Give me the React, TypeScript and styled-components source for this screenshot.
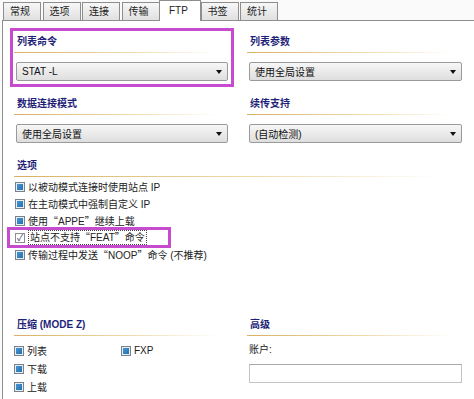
import React, {FC} from "react";
import styled, {createGlobalStyle} from "styled-components";

const GlobalStyle = createGlobalStyle`
  html, body {
    margin: 0;
    padding: 0;
    background: #fafafa;
  }
  body {
    font-family: "Liberation Sans", "Noto Sans CJK SC", sans-serif;
    font-size: 10px;
    color: #1e1e1e;
  }
`;

const Window = styled.div`
  width: 474px;
  height: 399px;
  overflow: hidden;
  display: flex;
  flex-direction: column;
  background: #fafafa;
`;

const TabBar = styled.div`
  display: flex;
  align-items: flex-end;
  height: 20px;
  padding-left: 3px;
  gap: 1.5px;
`;

const Tab = styled.div<{ $active?: boolean }>`
  position: relative;
  box-sizing: border-box;
  width: ${p => (p.$active ? 42 : 38)}px;
  height: ${p => (p.$active ? 21 : 18)}px;
  margin: ${p => (p.$active ? "0 -2px -1px" : "0")};
  padding-left: ${p => (p.$active ? 9 : 6)}px;
  border: 1px solid #8e8e8e;
  border-bottom: none;
  background: ${p => (p.$active ? "#fff" : "linear-gradient(#f7f7f7, #e0e0e0)")};
  line-height: ${p => (p.$active ? 19 : 17)}px;
  color: #222;
  z-index: ${p => (p.$active ? 2 : 1)};
`;

const Panel = styled.div`
  flex: 1;
  margin-left: 2px;
  padding: 13px 12px 0 13px;
  border-top: 1px solid #8e8e8e;
  border-left: 1px solid #8e8e8e;
  background: #fff;
  display: grid;
  grid-template-columns: 212px 213px;
  grid-auto-rows: min-content;
  column-gap: 21px;
  row-gap: 15px;
`;

const Section = styled.section<{ $wide?: boolean; $highlight?: boolean; $gapAbove?: number }>`
  display: flex;
  flex-direction: column;
  grid-column: ${p => (p.$wide ? "1 / -1" : "auto")};
  margin-top: ${p => p.$gapAbove || 0}px;
  outline: ${p => (p.$highlight ? "3px solid #c74bcf" : "none")};
  outline-offset: 3px;
`;

const Heading = styled.div`
  height: 16px;
  line-height: 16px;
  padding-left: 1px;
  font-weight: bold;
  color: #1f1f78;
`;

const Rule = styled.div`
  height: 1px;
  margin: 2px 0 0 -2px;
  background: linear-gradient(to right, #d9b062, #efdcae 55%, rgba(255, 255, 255, 0) 95%);
`;

const SelectBox = styled.div`
  box-sizing: border-box;
  margin-top: 9px;
  height: 19px;
  padding: 0 5px;
  border: 1px solid #9a9a9a;
  border-radius: 2px;
  background: linear-gradient(#f7f7f7, #dedede);
  display: flex;
  align-items: center;
  justify-content: space-between;
  color: #111;
`;

const Arrow = styled.span`
  width: 0;
  height: 0;
  border-left: 3px solid transparent;
  border-right: 3px solid transparent;
  border-top: 4px solid #111;
`;

const OptionList = styled.div`
  margin-top: 1px;
  display: flex;
  flex-direction: column;
`;

const OptionRow = styled.div<{ $highlight?: boolean }>`
  box-sizing: border-box;
  height: 17px;
  display: flex;
  align-items: center;
  gap: 3px;
  margin-left: ${p => (p.$highlight ? -7 : -1)}px;
  padding-left: ${p => (p.$highlight ? 6 : 0)}px;
  width: ${p => (p.$highlight ? "160px" : "auto")};
  outline: ${p => (p.$highlight ? "3px solid #c74bcf" : "none")};
  outline-offset: -1px;
  white-space: nowrap;
  color: #222;
`;

const Box = styled.span<{ $checked?: boolean }>`
  box-sizing: border-box;
  flex: none;
  width: 10px;
  height: 10px;
  border: 1px solid ${p => (p.$checked ? "#8e8e8e" : "#76828e")};
  box-shadow: inset 0 0 0 1px ${p => (p.$checked ? "#fff" : "#e6edf3")};
  background: ${p => (p.$checked ? "#fff" : "linear-gradient(135deg, #4d9cd9, #1e6aa6)")};
  display: flex;
  align-items: center;
  justify-content: center;
  font-size: 9px;
  line-height: 8px;
  color: #2e3f6e;
`;

const FocusText = styled.span`
  border: 1px dotted #444;
  padding: 0 1px;
  line-height: 12px;
`;

const Quote = styled.span`
  font-family: "Noto Sans CJK SC", sans-serif;
`;

const CompressionGrid = styled.div`
  margin-top: 6px;
  display: grid;
  grid-template-columns: 107px auto;
  grid-auto-rows: 18px;
  margin-left: -1px;
`;

const FieldLabel = styled.div`
  margin-top: 7px;
  height: 14px;
  line-height: 14px;
  color: #222;
`;

const TextInput = styled.div`
  box-sizing: border-box;
  margin-top: 7px;
  height: 19px;
  border: 1px solid #c4c4c4;
  border-top-color: #a8a8a8;
  background: #fff;
`;

const tabs = ["常规", "选项", "连接", "传输", "FTP", "书签", "统计"];

interface CheckProps {
  label: React.ReactNode;
  checked?: boolean;
  highlight?: boolean;
}

const Check: FC<CheckProps> = ({label, checked, highlight}) => (
  <OptionRow $highlight={highlight}>
    <Box $checked={checked}>{checked ? "✓" : null}</Box>
    {checked ? <FocusText>{label}</FocusText> : <span>{label}</span>}
  </OptionRow>
);

const Select: FC<{ value: string }> = ({value}) => (
  <SelectBox>
    <span>{value}</span>
    <Arrow/>
  </SelectBox>
);

export default function App() {
  return (
    <Window>
      <GlobalStyle/>
      <TabBar>
        {tabs.map(t => <Tab key={t} $active={t === "FTP"}>{t}</Tab>)}
      </TabBar>
      <Panel>
        <Section $highlight>
          <Heading>列表命令</Heading>
          <Rule/>
          <Select value="STAT -L"/>
        </Section>
        <Section>
          <Heading>列表参数</Heading>
          <Rule/>
          <Select value="使用全局设置"/>
        </Section>

        <Section>
          <Heading>数据连接模式</Heading>
          <Rule/>
          <Select value="使用全局设置"/>
        </Section>
        <Section>
          <Heading>续传支持</Heading>
          <Rule/>
          <Select value="(自动检测)"/>
        </Section>

        <Section $wide>
          <Heading>选项</Heading>
          <Rule/>
          <OptionList>
            <Check label="以被动模式连接时使用站点 IP"/>
            <Check label="在主动模式中强制自定义 IP"/>
            <Check label={<>使用<Quote>“</Quote>APPE<Quote>”</Quote>继续上载</>}/>
            <Check checked highlight label={<>站点不支持<Quote>“</Quote>FEAT<Quote>”</Quote>命令</>}/>
            <Check label={<>传输过程中发送<Quote>“</Quote>NOOP<Quote>”</Quote>命令 (不推荐)</>}/>
          </OptionList>
        </Section>

        <Section $gapAbove={39}>
          <Heading>压缩 (MODE Z)</Heading>
          <Rule/>
          <CompressionGrid>
            <Check label="列表"/>
            <Check label="FXP"/>
            <Check label="下载"/>
            <span/>
            <Check label="上载"/>
          </CompressionGrid>
        </Section>
        <Section $gapAbove={39}>
          <Heading>高级</Heading>
          <Rule/>
          <FieldLabel>账户:</FieldLabel>
          <TextInput/>
        </Section>
      </Panel>
    </Window>
  );
}
